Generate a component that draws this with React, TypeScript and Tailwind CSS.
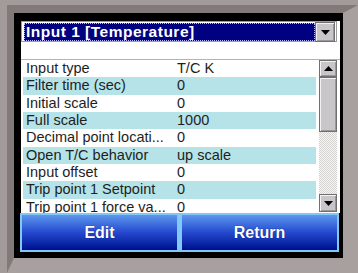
import React from "react";

const rows: [string, string][] = [
  ["Input type", "T/C K"],
  ["Filter time (sec)", "0"],
  ["Initial scale", "0"],
  ["Full scale", "1000"],
  ["Decimal point locati...", "0"],
  ["Open T/C behavior", "up scale"],
  ["Input offset", "0"],
  ["Trip point 1 Setpoint", "0"],
  ["Trip point 1 force va...", "0"],
];

function Arrow({ up }: { up?: boolean }) {
  return (
    <svg width="9" height="5" viewBox="0 0 9 5">
      <path d={up ? "M0 5 L4.5 0 L9 5 Z" : "M0 0 L9 0 L4.5 5 Z"} fill="#000" />
    </svg>
  );
}

function SysButton({ className = "", children }: { className?: string; children?: React.ReactNode }) {
  return (
    <div
      className={`flex items-center justify-center border border-[#707070] bg-[#c9c6c9] shadow-[inset_1px_1px_0_#f2f2f2,inset_-1px_-1px_0_#9a979a] ${className}`}
    >
      {children}
    </div>
  );
}

export default function App() {
  return (
    <div className="flex h-[273px] w-[358px] bg-[#a39b99] pl-[7px] pt-[5px] font-['Liberation_Sans',Arial,sans-serif]">
      <div className="flex flex-1 flex-col border-t-[8px] border-r-[15px] border-b-[15px] border-l-[7px] border-t-[#827a78] border-r-[#a8a09e] border-b-[#a8a09e] border-l-[#827a78] bg-black pt-[8px] pr-[3px] pb-[6px] pl-[7px]">
        <div className="flex h-[192px] w-[319px] flex-col bg-white">
          {/* dropdown */}
          <div className="flex h-[21px] w-[316px] border border-[#9c9c9c] p-px">
            <div className="ml-px flex h-[18px] w-[292px] items-center border border-dotted border-[#b8b8ff] bg-[#000080] pl-[1px] text-[15.5px] leading-none font-bold tracking-[0.5px] text-white">
              Input 1 [Temperature]
            </div>
            <SysButton className="-mt-px h-[20px] w-[20px]">
              <Arrow />
            </SysButton>
          </div>
          <div className="h-[17px]" />
          {/* list */}
          <div className="flex h-[154px] overflow-hidden border-t border-[#b4b4b4]">
            <div className="ml-[2px] w-[293px] overflow-hidden">
              {rows.map(([label, value], i) => (
                <div
                  key={label}
                  className={`flex h-[17.33px] items-center text-[14.5px] leading-[17.33px] whitespace-nowrap text-[#1e1e1e] ${
                    i % 2 === 1 ? "bg-[#b5e3e8]" : "bg-white"
                  }`}
                >
                  <span className="w-[154px] overflow-hidden pl-[3px]">{label}</span>
                  <span>{value}</span>
                </div>
              ))}
            </div>
            <div className="ml-[3px] flex w-[18px] flex-col">
              <SysButton className="h-[17px]">
                <Arrow up />
              </SysButton>
              <SysButton className="h-[55px]" />
              <div className="h-[62px] bg-[repeating-conic-gradient(#d6d3d3_0_25%,#f5f5f5_0_50%)] bg-size-[2px_2px]" />
              <SysButton className="h-[18px]">
                <Arrow />
              </SysButton>
            </div>
          </div>
        </div>
        {/* buttons */}
        <div className="-ml-px flex h-[39px] w-[319px] gap-px bg-[#8fc6e6]">
          {["Edit", "Return"].map((t) => (
            <button
              key={t}
              className="flex flex-1 items-center justify-center border-2 border-[#80c9f6] bg-linear-to-b from-[#5f95ec] via-[#2648cf] to-[#000b8e] text-[16px] font-bold text-white [text-shadow:0_0_1px_#001060]"
            >
              {t}
            </button>
          ))}
        </div>
      </div>
    </div>
  );
}
